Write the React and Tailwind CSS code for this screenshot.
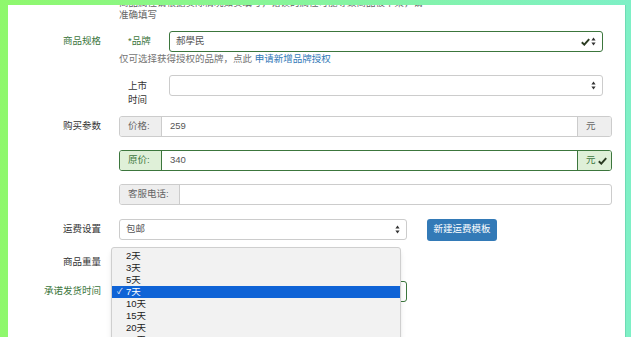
import React from 'react';

const font = { fontFamily: '"Liberation Sans", "Noto Sans CJK SC", sans-serif' };

const Arrows = () => (
  <svg width="5" height="9" viewBox="0 0 5 9" className="shrink-0">
    <path d="M2.5 0.5 L4.6 3.5 L0.4 3.5 Z" fill="#333" />
    <path d="M2.5 8.5 L4.6 5.5 L0.4 5.5 Z" fill="#333" />
  </svg>
);

const Check = ({ className = '' }) => (
  <svg width="9" height="8" viewBox="0 0 9 8" className={className}>
    <path d="M0.8 4.2 L3.3 6.6 L8.2 1.2" fill="none" stroke="#2b3b22" strokeWidth="2" />
  </svg>
);

const days = ['2天', '3天', '5天', '7天', '10天', '15天', '20天', '30天'];

export default function App() {
  return (
    <div
      className="w-[631px] h-[337px] overflow-hidden bg-gradient-to-r from-[#8ff86c] to-[#7ef0c6] pt-[5px] pl-[8px] pr-[5px] text-[9.5px] text-[#333]"
      style={font}
    >
      <div className="relative h-full bg-white border-r border-[#6edbb4] overflow-hidden">
        {/* intro text */}
        <div className="-mt-[8px] ml-[111px] leading-[12px] text-[#666]">
          <div className="whitespace-nowrap">商品属性请根据实际情况如实填写，错误的属性可能导致商品被下架，请</div>
          <div>准确填写</div>
        </div>

        {/* 商品规格 / 品牌 */}
        <div className="flex items-center mt-[10px] h-[21px]">
          <div className="w-[93px] text-right text-[#3c763d]">商品规格</div>
          <div className="ml-[18px] w-[50px] pl-[9px] text-[#3c763d]">*品牌</div>
          <div className="w-[434px] h-[21px] flex items-center border border-[#3c763d] rounded-[3px] px-[6px]">
            <span className="flex-1 text-[#555]">郝學民</span>
            <Check className="mr-[1px]" />
            <Arrows />
          </div>
        </div>
        <div className="ml-[111px] mt-[1px] leading-[12px] text-[#737373]">
          仅可选择获得授权的品牌，点此 <span className="text-[#337ab7]">申请新增品牌授权</span>
        </div>

        {/* 上市时间 */}
        <div className="flex items-start mt-[10px] h-[21px]">
          <div className="w-[93px]" />
          <div className="ml-[18px] w-[50px] pl-[9px] pt-[4px] leading-[14px]">
            上市<br />时间
          </div>
          <div className="w-[434px] h-[21px] flex items-center justify-end border border-[#ccc] rounded-[3px] px-[6px]">
            <Arrows />
          </div>
        </div>

        {/* 购买参数 */}
        <div className="flex items-center mt-[20px] h-[21px]">
          <div className="w-[93px] text-right">购买参数</div>
          <div className="ml-[18px] w-[493px] h-[21px] flex border border-[#ccc] rounded-[3px] overflow-hidden">
            <div className="w-[42px] bg-[#eee] border-r border-[#ccc] flex items-center pl-[8px] text-[#666]">价格:</div>
            <div className="flex-1 flex items-center pl-[8px] text-[#555]">259</div>
            <div className="w-[34px] bg-[#eee] border-l border-[#ccc] flex items-center pl-[8px] text-[#666]">元</div>
          </div>
        </div>

        <div className="flex items-center mt-[13px] h-[21px]">
          <div className="w-[93px]" />
          <div className="ml-[18px] w-[493px] h-[21px] flex border border-[#3c763d] rounded-[3px] overflow-hidden">
            <div className="w-[42px] bg-[#dff0d8] border-r border-[#3c763d] flex items-center pl-[8px] text-[#3c763d]">原价:</div>
            <div className="flex-1 flex items-center pl-[8px] text-[#555]">340</div>
            <div className="w-[34px] bg-[#dff0d8] border-l border-[#3c763d] flex items-center pl-[8px] gap-[2px] text-[#3c763d]">
              元<Check />
            </div>
          </div>
        </div>

        <div className="flex items-center mt-[13px] h-[21px]">
          <div className="w-[93px]" />
          <div className="ml-[18px] w-[493px] h-[21px] flex border border-[#ccc] rounded-[3px] overflow-hidden">
            <div className="w-[60px] bg-[#eee] border-r border-[#ccc] flex items-center pl-[8px] text-[#666]">客服电话:</div>
            <div className="flex-1" />
          </div>
        </div>

        {/* 运费设置 */}
        <div className="flex items-center mt-[14px] h-[21px]">
          <div className="w-[93px] text-right">运费设置</div>
          <div className="ml-[18px] w-[288px] h-[21px] flex items-center border border-[#ccc] rounded-[3px] px-[6px]">
            <span className="flex-1 text-[#555]">包邮</span>
            <Arrows />
          </div>
          <button className="ml-[20px] w-[70px] h-[22px] bg-[#337ab7] rounded-[3px] text-white text-[9.5px]">新建运费模板</button>
        </div>

        {/* 商品重量 */}
        <div className="flex items-center mt-[12px] h-[21px]">
          <div className="w-[93px] text-right">商品重量</div>
        </div>

        {/* 承诺发货时间 */}
        <div className="flex items-center mt-[8px] h-[21px]">
          <div className="w-[93px] text-right text-[#3c763d]">承诺发货时间</div>
          <div className="ml-[18px] w-[288px] h-[21px] flex items-center justify-end border border-[#3c763d] rounded-[3px] px-[6px]">
            <Arrows />
          </div>
        </div>

        {/* open dropdown list */}
        <div className="absolute left-[103px] top-[242px] w-[290px] h-[120px] bg-[#f2f2f2] border border-[#cfcfcf] rounded-[3px] shadow-md pt-[2px]">
          {days.map((d) => (
            <div
              key={d}
              className={
                d === '7天'
                  ? 'relative h-[12px] leading-[12px] pl-[14px] bg-[#0f63d6] text-white'
                  : 'relative h-[12px] leading-[12px] pl-[14px] text-[#222]'
              }
            >
              {d === '7天' && <span className="absolute left-[5px] top-0 text-[8px]">✓</span>}
              {d}
            </div>
          ))}
        </div>
      </div>
    </div>
  );
}
